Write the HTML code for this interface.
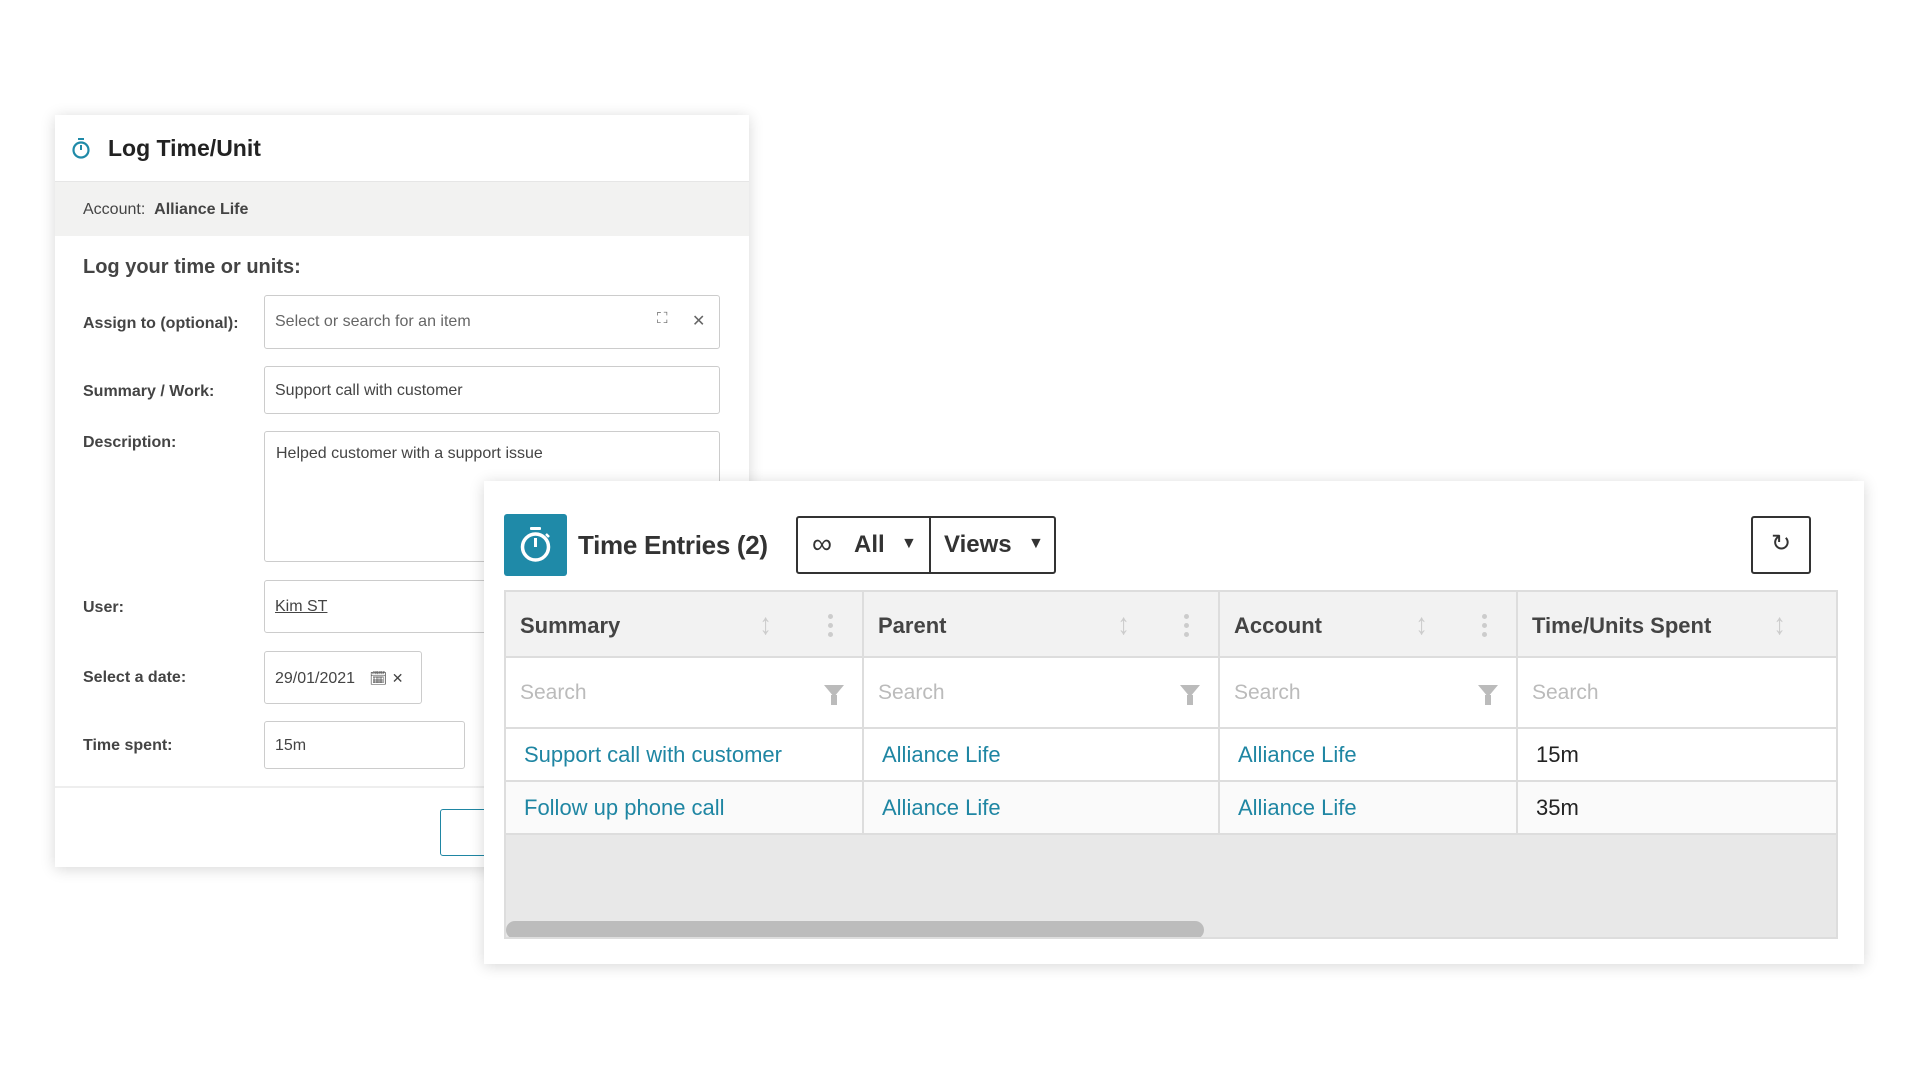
<!DOCTYPE html>
<html><head><meta charset="utf-8"><style>
*{box-sizing:border-box;margin:0;padding:0}
body{width:1920px;height:1080px;background:#fff;position:relative;overflow:hidden;font-family:"Liberation Sans",sans-serif;color:#333}
.a{position:absolute}
.card1{left:55px;top:115px;width:694px;height:752px;background:#fff;box-shadow:0 2px 14px rgba(0,0,0,.16)}
.lbl{position:absolute;left:28px;font-size:16px;font-weight:bold;color:#444}
.inp{position:absolute;left:209px;border:1px solid #ccc;border-radius:3px;background:#fff;font-size:16px;color:#444;padding-left:10px}
.card2{left:484px;top:481px;width:1380px;height:483px;background:#fff;box-shadow:0 2px 14px rgba(0,0,0,.16)}
.th{position:absolute;top:0;height:66px;background:#f2f2f2;border-right:2px solid #ddd;border-bottom:2px solid #ddd;font-size:22px;font-weight:bold;color:#444;padding:21px 0 0 14px}
.fr{position:absolute;top:66px;height:71px;border-right:2px solid #ddd;border-bottom:2px solid #ddd;font-size:21px;color:#bbb;padding:23px 0 0 14px;background:#fff}
.td{position:absolute;height:53px;border-right:2px solid #ddd;border-bottom:2px solid #ddd;font-size:22px;color:#1f86a3;padding:13px 0 0 18px}
.sort{position:absolute;top:16px;color:#ccc;font-size:30px;font-weight:normal;transform:scaleX(.8)}
.dots{position:absolute;top:22px;width:6px}
.dots i{display:block;width:5px;height:5px;border-radius:50%;background:#ccc;margin-bottom:4px}
.filt{position:absolute;top:27px;width:0;height:0;border-left:10px solid transparent;border-right:10px solid transparent;border-top:12px solid #bbb}
.filt:after{content:"";position:absolute;left:-3px;top:-2px;width:6px;height:10px;background:#bbb}
</style></head><body>

<div class="a card1">
  <svg class="a" style="left:16px;top:22px" width="20" height="22" viewBox="0 0 20 22"><rect x="7" y="1" width="6" height="2" fill="#1f8aa8"/><circle cx="10" cy="13" r="7.5" fill="none" stroke="#1f8aa8" stroke-width="2.2"/><rect x="9" y="8" width="2" height="5" fill="#1f8aa8"/></svg>
  <div class="a" style="left:53px;top:20px;font-size:23px;font-weight:bold;color:#222">Log Time/Unit</div>
  <div class="a" style="left:0;top:66px;width:694px;height:55px;background:#f2f2f1;border-top:1px solid #e6e6e6"></div>
  <div class="a" style="left:28px;top:86px;font-size:16px;color:#444">Account:&nbsp; <b>Alliance Life</b></div>
  <div class="a" style="left:28px;top:141px;font-size:20px;font-weight:bold;color:#444">Log your time or units:</div>
  <div class="lbl" style="top:200px">Assign to (optional):</div>
  <div class="inp" style="top:180px;width:456px;height:54px;padding-top:17px;color:#666">Select or search for an item<span class="a" style="left:392px;top:14px;font-size:15px">⛶</span><span class="a" style="left:427px;top:15px;font-size:16px">✕</span></div>
  <div class="lbl" style="top:268px">Summary / Work:</div>
  <div class="inp" style="top:251px;width:456px;height:48px;padding-top:15px">Support call with customer</div>
  <div class="lbl" style="top:319px">Description:</div>
  <div class="inp" style="top:316px;width:456px;height:131px;padding:13px 0 0 11px">Helped customer with a support issue</div>
  <div class="lbl" style="top:484px">User:</div>
  <div class="inp" style="top:465px;width:250px;height:53px;padding-top:17px;text-decoration:underline">Kim ST</div>
  <div class="lbl" style="top:554px">Select a date:</div>
  <div class="inp" style="top:536px;width:158px;height:53px;padding-top:18px">29/01/2021 <span style="font-size:14px;margin-left:10px">🗓</span> <span style="font-size:14px">✕</span></div>
  <div class="lbl" style="top:622px">Time spent:</div>
  <div class="inp" style="top:606px;width:201px;height:48px;padding-top:15px">15m</div>
  <div class="a" style="left:0;top:671px;width:694px;height:2px;background:#eee"></div>
  <div class="a" style="left:385px;top:694px;width:60px;height:47px;border:1px solid #1f86a3;border-radius:3px"></div>
</div>

<div class="a card2">
  <div class="a" style="left:20px;top:33px;width:63px;height:62px;background:#1f8aa8;border-radius:3px">
    <svg width="63" height="62" viewBox="0 0 63 62"><rect x="26" y="13" width="11" height="3" rx="1" fill="#fff"/><circle cx="31.5" cy="33" r="13" fill="none" stroke="#fff" stroke-width="3.5"/><rect x="30" y="24" width="3" height="9" fill="#fff"/><path d="M42 20l3 3" stroke="#fff" stroke-width="2.5"/></svg>
  </div>
  <div class="a" style="left:94px;top:49px;font-size:26px;font-weight:bold;color:#333;letter-spacing:-0.3px">Time Entries (2)</div>
  <div class="a" style="left:312px;top:35px;width:260px;height:58px;border:2px solid #333;border-radius:3px"></div>
  <div class="a" style="left:445px;top:35px;width:2px;height:58px;background:#333"></div>
  <div class="a" style="left:328px;top:47px;font-size:28px;color:#333">∞</div>
  <div class="a" style="left:370px;top:50px;font-size:24px;font-weight:bold;color:#333">All</div>
  <div class="a" style="left:417px;top:54px;font-size:16px;color:#333">▼</div>
  <div class="a" style="left:460px;top:50px;font-size:24px;font-weight:bold;color:#333">Views</div>
  <div class="a" style="left:544px;top:54px;font-size:16px;color:#333">▼</div>
  <div class="a" style="left:1267px;top:35px;width:60px;height:58px;border:2px solid #333;border-radius:3px;font-size:24px;text-align:center;padding-top:11px;color:#333">↻</div>

  <div class="a" style="left:20px;top:109px;width:1334px;height:349px;background:#e8e8e8;border:2px solid #ddd;overflow:hidden">
    <div class="th" style="left:0;width:358px">Summary<span class="sort" style="left:252px">↕</span><span class="dots" style="left:322px"><i></i><i></i><i></i></span></div>
    <div class="th" style="left:358px;width:356px">Parent<span class="sort" style="left:252px">↕</span><span class="dots" style="left:320px"><i></i><i></i><i></i></span></div>
    <div class="th" style="left:714px;width:298px">Account<span class="sort" style="left:194px">↕</span><span class="dots" style="left:262px"><i></i><i></i><i></i></span></div>
    <div class="th" style="left:1012px;width:322px;border-right:none">Time/Units Spent<span class="sort" style="left:254px">↕</span></div>
    <div class="fr" style="left:0;width:358px">Search<span class="filt" style="left:318px"></span></div>
    <div class="fr" style="left:358px;width:356px">Search<span class="filt" style="left:316px"></span></div>
    <div class="fr" style="left:714px;width:298px">Search<span class="filt" style="left:258px"></span></div>
    <div class="fr" style="left:1012px;width:322px">Search</div>
    <div class="td" style="top:137px;left:0;width:358px;background:#fff">Support call with customer</div>
    <div class="td" style="top:137px;left:358px;width:356px;background:#fff">Alliance Life</div>
    <div class="td" style="top:137px;left:714px;width:298px;background:#fff">Alliance Life</div>
    <div class="td" style="top:137px;left:1012px;width:322px;background:#fff;color:#222">15m</div>
    <div class="td" style="top:190px;left:0;width:358px;background:#fafafa">Follow up phone call</div>
    <div class="td" style="top:190px;left:358px;width:356px;background:#fafafa">Alliance Life</div>
    <div class="td" style="top:190px;left:714px;width:298px;background:#fafafa">Alliance Life</div>
    <div class="td" style="top:190px;left:1012px;width:322px;background:#fafafa;color:#222">35m</div>
    <div class="a" style="left:0;top:329px;width:698px;height:18px;background:#bcbcbc;border-radius:9px"></div>
  </div>
</div>
</body></html>
